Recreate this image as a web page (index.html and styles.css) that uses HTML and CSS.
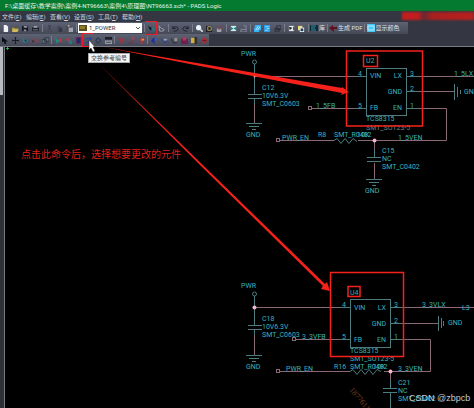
FILE: index.html
```html
<!DOCTYPE html>
<html lang="zh-CN">
<head>
    <meta charset="UTF-8">
    <meta name="viewport" content="width=device-width, initial-scale=1.0">
    <title>PADS Logic</title>
    <link rel="stylesheet" href="styles.css">
</head>
<body>
    <header class="title-bar">F:\桌面缓存\教学案例\案例4-NT96663\案例4\原理图\NT96663.sch* - PADS Logic</header>

    <nav class="menu-bar">
        <button class="menu-item">文件(<u>F</u>)</button>
        <button class="menu-item">编辑(<u>E</u>)</button>
        <button class="menu-item">查看(<u>V</u>)</button>
        <button class="menu-item">设置(<u>S</u>)</button>
        <button class="menu-item">工具(<u>T</u>)</button>
        <button class="menu-item">帮助(<u>H</u>)</button>
        <span class="redacted"></span>
    </nav>

    <div class="toolbars">
        <div class="toolbar toolbar-main">
            <button class="tool" aria-label="New"><svg viewBox="0 0 8 8"><path d="M2 0h3l2 2v6H2z" fill="#eef1f5"/></svg></button>
            <button class="tool" aria-label="Open"><svg viewBox="0 0 8 8"><path d="M0 3h3l1-1h3v5H0z" fill="#b39b45"/><path d="M3 1h4v3H3z" fill="#4d5b4a"/><path d="M1 5h7L6 8H0z" fill="#d0bd62"/></svg></button>
            <button class="tool" aria-label="Save"><svg viewBox="0 0 8 8"><path d="M0 1h7v6H0z" fill="#15171f"/><path d="M2 1h4v2H2zM2 5h3v2H2z" fill="#8c919e"/></svg></button>
            <button class="tool" aria-label="Print"><svg viewBox="0 0 8 8"><path d="M0 3h8v4H0z" fill="#1b1d26"/><path d="M2 1h4v2H2zM1 5h6v1H1z" fill="#9ba0ab"/></svg></button>
            <span class="sep"></span>
            <button class="tool" aria-label="Cut"><svg viewBox="0 0 8 8"><path d="M3 0l2 5M5 0L3 5M2 7h1M5 7h1" stroke="#353946" fill="none"/></svg></button>
            <button class="tool" aria-label="Copy"><svg viewBox="0 0 8 8"><path d="M1 1h4v5H1z" fill="#4a4e5c"/><path d="M3 3h4v5H3z" fill="#343846"/></svg></button>
            <button class="tool" aria-label="Paste"><svg viewBox="0 0 8 8"><path d="M0 1h6v6H0z" fill="#4a4b51"/><path d="M2 0h2v2H2z" fill="#b4a982"/><path d="M3 3h5v5H3z" fill="#9fa5b2"/></svg></button>
            <span class="sep"></span>
            <div class="sheet">
                <svg class="sheet-icon" viewBox="0 0 8 8"><path d="M0 1h8v6H0z" fill="#584e1e"/><path d="M1 2h5v3H1z" fill="#8d7a28"/></svg>
                <select class="sheet-select" aria-label="Sheet"><option>1_POWER</option></select>
                <svg class="sheet-arrow" viewBox="0 0 6 6"><path d="M1 2l2 2 2-2" stroke="#555" fill="none"/></svg>
            </div>
            <span class="sep"></span>
            <button class="tool marked" aria-label="Selection toolbar"><svg viewBox="0 0 8 8"><path d="M0 1l4 2v3L2 5z" fill="#11131b"/><path d="M4 3h4v4H5z" fill="#247384"/></svg></button>
            <button class="tool" aria-label="Design toolbar"><svg viewBox="0 0 8 8"><path d="M1 1l3 3 3 1-1 2H2z" fill="none" stroke="#a0a5b0"/></svg></button>
            <span class="sep"></span>
            <button class="tool" aria-label="Undo"><svg viewBox="0 0 8 8"><path d="M1 1v3h3M1 4c2-3 6-2 6 0S5 7 2 7" fill="none" stroke="#191c27"/></svg></button>
            <button class="tool" aria-label="Redo"><svg viewBox="0 0 8 8"><path d="M7 1v3H4M7 4C5 1 1 2 1 4s2 3 5 3" fill="none" stroke="#191c27"/></svg></button>
            <span class="sep"></span>
            <button class="tool" aria-label="Zoom"><svg viewBox="0 0 8 8"><circle cx="3" cy="3" r="3" fill="#e8f4fb"/><path d="M5 5l3 3" stroke="#d3d8dd" stroke-width="2"/></svg></button>
            <button class="tool" aria-label="Sheet view"><svg viewBox="0 0 8 8"><path d="M0 1h7v7H0z" fill="#202127"/><path d="M2 2h4v4H2z" fill="none" stroke="#c1b064"/></svg></button>
            <button class="tool" aria-label="Redraw"><svg viewBox="0 0 8 8"><path d="M1 4h5v4H1z" fill="#a6a4ad"/><path d="M3 5l4-5" stroke="#7c4250" stroke-width="2"/></svg></button>
            <span class="sep"></span>
            <button class="tool" aria-label="Layout link"><svg viewBox="0 0 8 8"><path d="M1 1h6v6H1z" fill="#ccebe9"/><path d="M1 2l3 2 3-2v4L4 4 1 6z" fill="#16858b"/></svg></button>
            <button class="tool" aria-label="Router link"><svg viewBox="0 0 8 8"><path d="M1 5h6v3H1zM4 1h3v4" fill="none" stroke="#898d9b"/></svg></button>
            <span class="sep"></span>
            <button class="tool" aria-label="Output window"><svg viewBox="0 0 8 8"><path d="M1 0h7v6H6v2H0V3h1z" fill="#36aff0"/><path d="M2 6l3-5M4 6l3-4" stroke="#c6edff"/></svg></button>
            <button class="tool" aria-label="Project explorer"><svg viewBox="0 0 8 8"><path d="M0 0h7v8H0z" fill="#289ce7"/><path d="M1 2h5M3 4h3M1 6h4" stroke="#a6dcfa"/></svg></button>
            <button class="tool" aria-label="Properties"><svg viewBox="0 0 8 8"><path d="M3 1h5v4H3zM1 4h5v3H1z" fill="none" stroke="#292c36"/></svg></button>
            <span class="sep"></span>
            <button class="tool" aria-label="Assignments"><svg viewBox="0 0 8 8"><path d="M1 1h6v6H1z" fill="#e7e8e4"/><path d="M1 2l4 1-3 3zM6 2h1v4H6z" fill="#272835"/></svg></button>
            <button class="tool" aria-label="Status"><svg viewBox="0 0 8 8"><path d="M0 1h5v5H0z" fill="#ead878"/><path d="M2 3h5v5H2z" fill="#d7eff4"/><path d="M3 4h3v3H3z" fill="#2b3344"/></svg></button>
            <span class="sep"></span>
            <button class="tool-label"><svg viewBox="0 0 8 8"><path d="M0 1h8v6H0z" fill="#102a35"/><path d="M1 2h5M1 4h4M1 6h5" stroke="#2e91a5"/></svg>库</button>
            <span class="sep"></span>
            <button class="tool-label"><svg viewBox="0 0 8 8"><path d="M0 4l4-3v2h4v2H5v3z" fill="#61101c"/></svg>生成 PDF</button>
            <span class="sep"></span>
            <button class="tool-label"><svg viewBox="0 0 8 8"><path d="M0 0h8v8H0z" fill="#4ac7f3"/><path d="M1 2h6v4H1z" fill="none" stroke="#b6edff"/></svg>显示颜色</button>
        </div>

        <div class="toolbar toolbar-design">
            <button class="tool" aria-label="Select"><svg viewBox="0 0 8 8"><path d="M0 0l7 5-3 0 1 3-2 0-1-3-2 1z" fill="#0c0e15"/></svg></button>
            <button class="tool" aria-label="Move"><svg viewBox="0 0 8 8"><path d="M4 0v8M0 4h8M3 1h2M3 7h2M1 3v2M7 3v2" stroke="#151822"/></svg></button>
            <button class="tool" aria-label="Add part"><svg viewBox="0 0 8 8"><path d="M1 1l6 3-4 3-2-2z" fill="#287b8c"/><path d="M3 3h2v2H3z" fill="#11313b"/></svg></button>
            <button class="tool" aria-label="Delete"><svg viewBox="0 0 8 8"><path d="M0 5h3" stroke="#293240" stroke-width="2"/><path d="M2 2l5 4M7 2L2 6" stroke="#b8303d"/></svg></button>
            <button class="tool" aria-label="Duplicate"><svg viewBox="0 0 8 8"><path d="M0 3h5v4H0zM3 1h5v4H3z" fill="#65707d" stroke="#27323d"/></svg></button>
            <span class="sep"></span>
            <button class="tool" aria-label="Add component"><svg viewBox="0 0 8 8"><path d="M0 1l5 3-3 4z" fill="#1e8c85"/><path d="M5 2h2v4H5z" fill="#cf3841"/></svg></button>
            <button class="tool" aria-label="Add connection"><svg viewBox="0 0 8 8"><path d="M0 2h4l3 4H5z" fill="#c1343e"/><path d="M4 4h4v4H5z" fill="#19808b"/></svg></button>
            <button class="tool" aria-label="Add bus"><svg viewBox="0 0 8 8"><path d="M1 0h6v8H1z" fill="#202c68" stroke="#a62e50"/></svg></button>
            <button class="tool marked" aria-label="交换参考编号"><svg viewBox="0 0 8 8"><path d="M0 2h7M5 0l2 2-2 2M8 6H1" stroke="#203eaa" fill="none"/></svg></button>
            <button class="tool" aria-label="Swap pins"><svg viewBox="0 0 8 8"><path d="M3 1l4 3-4 3-2-3z" fill="none" stroke="#202e4e"/></svg></button>
            <button class="tool" aria-label="Attributes"><svg viewBox="0 0 8 8"><path d="M0 0h8v3H0z" fill="#1d2029"/><path d="M0 4h8v4H0z" fill="#989ca7"/><path d="M1 6h6" stroke="#383d49"/></svg></button>
            <span class="sep"></span>
            <button class="tool" aria-label="Net"><svg viewBox="0 0 8 8"><path d="M1 1l3 3v4M4 4l3-1" stroke="#ba2933" stroke-width="2" fill="none"/></svg></button>
            <button class="tool" aria-label="Split net"><svg viewBox="0 0 8 8"><path d="M1 7h3l3-6" stroke="#8e2736" fill="none"/><path d="M5 0h2v3H5z" fill="#d23b42"/></svg></button>
            <button class="tool" aria-label="Off page"><svg viewBox="0 0 8 8"><path d="M1 4l3-3 4 2-3 1v4H3V4z" fill="#c92c31"/><path d="M4 2h3v2H4z" fill="#e2964a"/></svg></button>
            <span class="sep"></span>
            <button class="tool" aria-label="Bus"><svg viewBox="0 0 8 8"><path d="M4 0v8L0 4z" fill="#1630a9"/><path d="M4 3h3V1" stroke="#3757ce" fill="none"/></svg></button>
            <button class="tool" aria-label="Split bus"><svg viewBox="0 0 8 8"><path d="M0 1l4 6 4-3" fill="none" stroke="#2440a5"/><path d="M3 2h4v2H3z" fill="#93a0ad"/></svg></button>
            <button class="tool" aria-label="Extend bus"><svg viewBox="0 0 8 8"><path d="M0 1l3 6 4-1" fill="none" stroke="#242a38"/><path d="M4 1h3v4H4z" fill="#99958d"/></svg></button>
            <button class="tool" aria-label="Create text"><svg viewBox="0 0 8 8"><path d="M0 2h8v6H0z" fill="#6e1f4e"/><path d="M2 0h4v4H2z" fill="#af3857"/></svg></button>
            <button class="tool" aria-label="2D lines"><svg viewBox="0 0 8 8"><path d="M0 1h5v6H0z" fill="#ceb13b"/><path d="M4 0h3v8H4z" fill="#332f34"/></svg></button>
            <button class="tool" aria-label="Fields"><svg viewBox="0 0 8 8"><path d="M4 0l4 4-4 4-4-4z" fill="#a52c33"/><path d="M2 4h4" stroke="#472236"/></svg></button>
        </div>
    </div>

    <main class="workspace">
        <div class="rail"><div class="rail-tab"></div></div>
        <svg class="schematic" role="img" aria-label="Schematic">
            <!-- everything below is drawn in window coordinates -->
            <g transform="translate(-5 -47)">
                <path class="origin" d="M6 48.500h3M7.500 47v3"/>

                <!-- U2 circuit -->
                <g class="net">
                    <path d="M254 76.500H355M418 76.500H480M418 91.500H454M312 108.500H355M418 108.500H446.500V140.500H358M280 140.500H334M254.500 101V123M374.500 140V156M374.500 163V179"/>
                    <rect x="308.500" y="106.500" width="3" height="3"/>
                    <rect x="276.500" y="138.500" width="3" height="3"/>
                </g>
                <g class="part">
                    <circle cx="254.500" cy="62" r="2"/>
                    <path d="M254.500 64V94M248 94.500H262M248 98.500H262M254.500 99V104M246 123.500H262M249 126.500H259M252 129.500H256"/>
                    <path d="M355 76.500H366M355 108.500H366M406 76.500H418M406 91.500H418M406 108.500H418"/>
                    <rect x="366.500" y="68.500" width="40" height="47"/>
                    <path d="M454.500 84V100M457.500 87V97M460.500 90V94"/>
                    <path d="M334 140.500l3 -2 4 5 4 -5 4 5 4 -5 4 3"/>
                    <path d="M374.500 150V157M367 157.500H381M367 161.500H381M366 179.500H382M369 182.500H379M372 185.500H376"/>
                </g>
                <circle class="node" cx="254.500" cy="76.500" r="1"/>
                <circle class="node" cx="374.500" cy="140.500" r="2"/>
                <g class="label">
                    <text x="241" y="56">PWR</text>
                    <text x="262" y="90">C12</text>
                    <text x="262" y="98">10V6.3V</text>
                    <text x="262" y="106">SMT_C0603</text>
                    <text x="246" y="137">GND</text>
                    <text x="316" y="108">1_5FB</text>
                    <text x="282" y="140">PWR_EN</text>
                    <text x="318" y="137">R8</text>
                    <text x="334" y="137">SMT_R0402</text>
                    <text x="357" y="137">10K</text>
                    <text x="366" y="63">U2</text>
                    <text x="358" y="76">4</text>
                    <text x="358" y="108">5</text>
                    <text x="410" y="76">3</text>
                    <text x="410" y="91">2</text>
                    <text x="410" y="108">1</text>
                    <text x="370" y="78">VIN</text>
                    <text x="370" y="110">FB</text>
                    <text class="end" x="402" y="78">LX</text>
                    <text class="end" x="402" y="94">GND</text>
                    <text class="end" x="402" y="110">EN</text>
                    <text x="366" y="121">TCS8315</text>
                    <text class="dim" x="366" y="130">SMT_SOT23-5</text>
                    <text x="454" y="76">1_5LX</text>
                    <text x="464" y="94">GND</text>
                    <text x="398" y="140">1_5VEN</text>
                    <text x="382" y="153">C15</text>
                    <text x="382" y="161">NC</text>
                    <text x="382" y="169">SMT_C0402</text>
                    <text x="365" y="193">GND</text>
                </g>

                <!-- U4 circuit -->
                <g class="net">
                    <path d="M254 307.500H339M402 307.500H480M402 323.500H438M296 339.500H339M402 339.500H430.500V371.500H384M280 371.500H350M254.500 333V355M390.500 371V384"/>
                    <rect x="292.500" y="337.500" width="3" height="3"/>
                    <rect x="276.500" y="369.500" width="3" height="3"/>
                </g>
                <g class="part">
                    <circle cx="254.500" cy="294" r="2"/>
                    <path d="M254.500 296V325M248 325.500H262M248 329.500H262M254.500 330V335M246 355.500H262M249 358.500H259M252 361.500H256"/>
                    <path d="M339 307.500H350M339 339.500H350M390 307.500H402M390 323.500H402M390 339.500H402"/>
                    <rect x="350.500" y="299.500" width="40" height="48"/>
                    <path d="M438.500 316V331M441.500 318V328M443.500 321V326"/>
                    <path d="M350 371.500l3 -2 4 5 4 -5 4 5 4 -5 4 5 4 -5 4 2"/>
                    <path d="M390.500 380V389M383 388.500H397M383 392.500H397M390.500 393V408"/>
                </g>
                <circle class="node" cx="254.500" cy="307.500" r="2"/>
                <circle class="node" cx="390.500" cy="371.500" r="2"/>
                <g class="label">
                    <text x="241" y="288">PWR</text>
                    <text x="262" y="321">C18</text>
                    <text x="262" y="329">10V6.3V</text>
                    <text x="262" y="337">SMT_C0603</text>
                    <text x="246" y="369">GND</text>
                    <text x="302" y="339">3_3VFB</text>
                    <text x="286" y="371">PWR_EN</text>
                    <text x="334" y="369">R16</text>
                    <text x="350" y="369">SMT_R0402</text>
                    <text x="373" y="369">10K</text>
                    <text x="350" y="295">U4</text>
                    <text x="342" y="307">4</text>
                    <text x="342" y="339">5</text>
                    <text x="394" y="307">3</text>
                    <text x="394" y="323">2</text>
                    <text x="394" y="339">1</text>
                    <text x="354" y="310">VIN</text>
                    <text x="354" y="342">FB</text>
                    <text class="end" x="386" y="310">LX</text>
                    <text class="end" x="386" y="326">GND</text>
                    <text class="end" x="386" y="342">EN</text>
                    <text x="350" y="353">TCS8315</text>
                    <text x="350" y="361">SMT_SOT23-5</text>
                    <text x="422" y="307">3_3VLX</text>
                    <text x="462" y="310">L3</text>
                    <text x="448" y="325">GND</text>
                    <text x="398" y="371">3_3VEN</text>
                    <text x="398" y="385">C21</text>
                    <text x="398" y="393">NC</text>
                    <text x="398" y="401">SMT_C0402</text>
                </g>

                <!-- notes on top of the sheet -->
                <g class="mark">
                    <rect x="346.500" y="51" width="76" height="75"/>
                    <rect x="363.500" y="55.500" width="14" height="11"/>
                    <rect x="330.500" y="272.500" width="73" height="84"/>
                    <rect x="348" y="286.500" width="12" height="10"/>
                </g>
                <path class="arrow" d="M104 47L342 88 342 87 349 92 341 95 342 93 200 66z"/>
                <path class="arrow" d="M99 64L325 284 327 282 330 291 321 289 323 286 200 165z"/>
                <text class="note" x="21" y="158">点击此命令后，选择想要更改的元件</text>
                <text class="stamp" transform="translate(349 390) rotate(50)">1877611</text>
                <text class="watermark" x="409" y="401">CSDN @zbpcb</text>
            </g>
        </svg>
    </main>

    <div class="tooltip" role="tooltip">交换参考编号</div>
    <svg class="cursor" viewBox="0 0 8 13"><path d="M1 0l6 7H5l2 4-2 1-2-4-2 2z" fill="#fff" stroke="#222" stroke-width=".5"/></svg>
</body>
</html>
```
FILE: styles.css
```css
:root {
    --title-green: #047a31;
    --bar: #343641;
    --teal: #3ab2be;
    --net: #8a6877;
    --mark: #f5221b;
}
* {
    box-sizing: border-box;
}
body {
    margin: 0;
    position: relative;
    background: #000;
    font-family: Roboto, "Noto Sans CJK SC", sans-serif;
    overflow: hidden;
}
button {
    font-family: inherit;
    color: inherit;
    background: none;
    border: none;
    padding: 0;
    margin: 0;
}
.title-bar {
    height: 11px;
    padding-left: 5px;
    background: var(--title-green);
    color: #e4f4e8;
    font-size: 6px;
    line-height: 11px;
    white-space: nowrap;
}
.menu-bar {
    display: flex;
    height: 11px;
    padding-left: 2px;
    background: var(--bar);
    color: #d5d7dd;
}
.menu-item {
    width: 24px;
    font-size: 6px;
    line-height: 10px;
    text-align: left;
    white-space: nowrap;
}
.redacted {
    width: 72px;
    height: 8px;
    margin: 1px 0 0 auto;
    background: linear-gradient(90deg, #c41d20 22%, #6c2730 30%, #a9201f 42%, #b9201f 100%);
    filter: blur(1px);
}
.toolbars {
    height: 25px;
    background: var(--bar);
    border-bottom: 1px solid #777b83;
}
.toolbar {
    display: flex;
    align-items: center;
    width: fit-content;
    height: 12px;
    background: linear-gradient(#5d6274, #454957);
    color: #dde0e6;
}
.toolbar-main {
    padding-right: 8px;
}
.tool {
    display: flex;
    align-items: center;
    justify-content: center;
    width: 10px;
    height: 12px;
    flex: none;
}
.tool svg {
    width: 7px;
    height: 7px;
}
.tool-label svg,
.sheet-icon {
    width: 8px;
    height: 8px;
    flex: none;
}
.marked {
    outline: 1px solid #e3202b;
}
.sep {
    width: 4px;
    height: 8px;
    flex: none;
    background: linear-gradient(#777c8b, #777c8b) center / 1px 100% no-repeat;
}
.toolbar-design .sep {
    width: 3px;
}
.tool-label {
    display: flex;
    align-items: center;
    gap: 1px;
    font-size: 6px;
    line-height: 12px;
    white-space: nowrap;
}
.sheet {
    display: flex;
    align-items: center;
    width: 64px;
    height: 10px;
    padding: 0 1px;
    background: #fff;
}
.sheet-select {
    flex: 1;
    min-width: 0;
    height: 10px;
    padding: 0 0 0 2px;
    border: none;
    background: none;
    appearance: none;
    color: #333;
    font-family: inherit;
    font-size: 6px;
    line-height: 10px;
}
.sheet-arrow {
    width: 6px;
    height: 6px;
}
.workspace {
    display: flex;
}
.rail {
    width: 5px;
    flex: none;
    background: #2e2f37;
    border-right: 1px solid #777b83;
}
.rail-tab {
    width: 3px;
    height: 48px;
    background: #b9bbc0;
}
.schematic {
    display: block;
    flex: 1;
    min-width: 0;
    height: 361px;
    background: #000;
    overflow: hidden;
}
.net {
    fill: none;
    stroke: var(--net);
}
.part {
    fill: none;
    stroke: #4d7c7e;
}
.origin {
    fill: none;
    stroke: #2fae4b;
}
.node {
    fill: #f3b5ca;
}
.label {
    fill: var(--teal);
    font-size: 7px;
}
.label .dim {
    fill: #6b8188;
}
.end {
    text-anchor: end;
}
.mark {
    fill: none;
    stroke: var(--mark);
    stroke-width: 1.5;
}
.arrow {
    fill: var(--mark);
}
.note {
    fill: #dd211c;
    font-size: 10px;
}
.stamp {
    fill: #7c3b1b;
    font-family: "Liberation Serif", serif;
    font-size: 8px;
}
.watermark {
    fill: #c4cbce;
    font-family: "Liberation Sans", sans-serif;
    font-size: 9px;
}
.tooltip {
    position: absolute;
    left: 88px;
    top: 53px;
    padding: 0 2px;
    background: #f6f6f6;
    border: 1px solid #aaa;
    color: #444;
    font-size: 6px;
    line-height: 8px;
    white-space: nowrap;
}
.cursor {
    position: absolute;
    left: 88px;
    top: 40px;
    width: 8px;
    height: 13px;
}
```
